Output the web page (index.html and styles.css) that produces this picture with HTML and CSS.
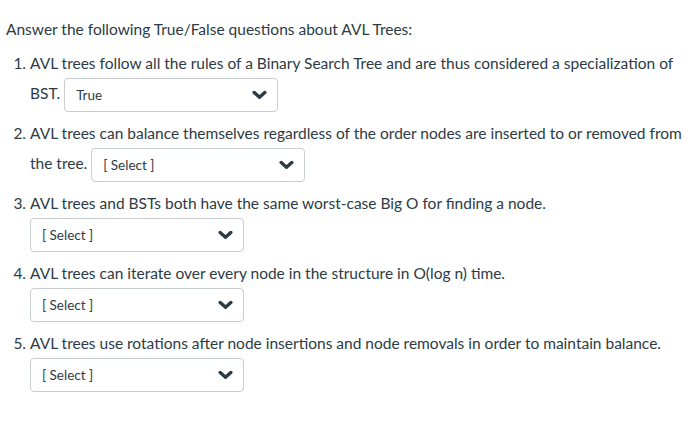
FILE: index.html
```html
<!DOCTYPE html>
<html lang="en">

<head>
    <meta charset="UTF-8">
    <meta name="viewport" content="width=device-width, initial-scale=1.0">
    <title>AVL Trees Quiz</title>
    <link rel="stylesheet" href="styles.css">
</head>

<body>
    <div class="question-text">
        <p class="intro">Answer the following True/False questions about AVL Trees:</p>
        <ol class="question-list">
            <li>AVL trees follow all the rules of a Binary Search Tree and are thus considered a specialization of BST.
                <span class="select-box">
                    <span class="select-value">True</span>
                    <svg class="chevron" width="15" height="10" viewBox="0 0 15 10"><polyline points="2.2,2.5 7.5,7.2 12.8,2.5" fill="none" stroke="#2d3b45" stroke-width="3.4" stroke-linecap="round" stroke-linejoin="round"/></svg>
                </span>
            </li>
            <li>AVL trees can balance themselves regardless of the order nodes are inserted to or removed from the tree.
                <span class="select-box">
                    <span class="select-value">[ Select ]</span>
                    <svg class="chevron" width="15" height="10" viewBox="0 0 15 10"><polyline points="2.2,2.5 7.5,7.2 12.8,2.5" fill="none" stroke="#2d3b45" stroke-width="3.4" stroke-linecap="round" stroke-linejoin="round"/></svg>
                </span>
            </li>
            <li>AVL trees and BSTs both have the same worst-case Big O for finding a node.
                <span class="select-box">
                    <span class="select-value">[ Select ]</span>
                    <svg class="chevron" width="15" height="10" viewBox="0 0 15 10"><polyline points="2.2,2.5 7.5,7.2 12.8,2.5" fill="none" stroke="#2d3b45" stroke-width="3.4" stroke-linecap="round" stroke-linejoin="round"/></svg>
                </span>
            </li>
            <li>AVL trees can iterate over every node in the structure in O(log n) time.
                <span class="select-box">
                    <span class="select-value">[ Select ]</span>
                    <svg class="chevron" width="15" height="10" viewBox="0 0 15 10"><polyline points="2.2,2.5 7.5,7.2 12.8,2.5" fill="none" stroke="#2d3b45" stroke-width="3.4" stroke-linecap="round" stroke-linejoin="round"/></svg>
                </span>
            </li>
            <li>AVL trees use rotations after node insertions and node removals in order to maintain balance.
                <span class="select-box">
                    <span class="select-value">[ Select ]</span>
                    <svg class="chevron" width="15" height="10" viewBox="0 0 15 10"><polyline points="2.2,2.5 7.5,7.2 12.8,2.5" fill="none" stroke="#2d3b45" stroke-width="3.4" stroke-linecap="round" stroke-linejoin="round"/></svg>
                </span>
            </li>
        </ol>
    </div>
</body>

</html>
```

FILE: styles.css
```css
body {
    font-family: Lato, "Open Sans", Arial, sans-serif;
    font-size: 15.5px;
    color: #2d3b45;
    background-color: white;
    margin: 0;
}

.question-text {
    width: 684px;
    padding-left: 6px;
}

.intro {
    margin: 19px 0 0 0;
    line-height: 20px;
}

.question-list {
    margin: 14px 0 0 0;
    padding-left: 24px;
    line-height: 20px;
}

.question-list li {
    margin-bottom: 6px;
}

.select-box {
    display: inline-flex;
    align-items: center;
    justify-content: space-between;
    box-sizing: border-box;
    width: 214px;
    height: 34px;
    margin: 5px 0;
    padding: 0 10px 0 11px;
    border: 1px solid #c7cdd1;
    border-radius: 4px;
    background-color: white;
    vertical-align: middle;
}

.select-value {
    font-size: 13.5px;
}

.chevron {
    display: block;
}
```
